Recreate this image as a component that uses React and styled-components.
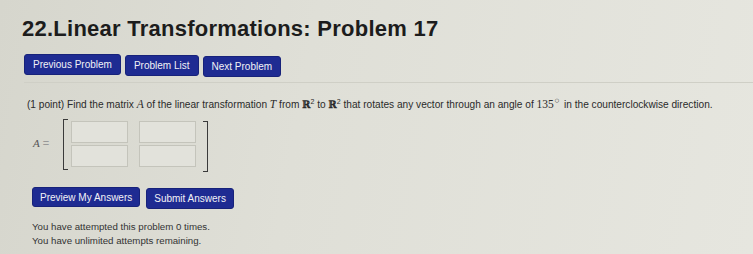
import React from "react";
import styled, { createGlobalStyle } from "styled-components";

const GlobalStyle = createGlobalStyle`
  html, body {
    margin: 0;
    padding: 0;
  }
  body {
    width: 753px;
    height: 254px;
    overflow: hidden;
    background: linear-gradient(100deg, #d6d6cd 0%, #dfdfd7 40%, #e6e6df 100%);
    font-family: "Liberation Sans", Arial, sans-serif;
    color: #2b2b2b;
  }
  sup {
    font-size: 7px;
    line-height: 0;
    vertical-align: 4px;
  }
`;

const Page = styled.div`
  padding: 16px 0 0 22px;
`;

const Title = styled.h1`
  margin: 0;
  font-size: 22px;
  font-weight: bold;
  color: #1c1c1c;
  letter-spacing: 0.25px;
`;

const NavRow = styled.div`
  display: flex;
  gap: 4px;
  margin: 12px 0 0 2px;
  align-items: flex-start;
`;

const Button = styled.button`
  background: #1e2b92;
  color: #f2f2f6;
  border: 1px solid #17227a;
  border-radius: 3px;
  font-family: "Liberation Sans", Arial, sans-serif;
  font-size: ${(p) => p.size || 10}px;
  padding: 0 ${(p) => p.pad || 8}px;
  height: ${(p) => p.h || 21}px;
  margin-top: ${(p) => p.drop || 0}px;
  cursor: pointer;
`;

const ProblemBox = styled.div`
  margin-top: 5px;
  margin-left: 2px;
  border-top: 1px solid #cfcfc6;
  padding: 15px 0 0 3px;
`;

const Statement = styled.p`
  margin: 0;
  font-size: 10.15px;
  line-height: 13px;
  color: #2a2a2a;
`;

const MathVar = styled.span`
  font-family: "Liberation Serif", "Times New Roman", serif;
  font-style: italic;
  font-size: 11.5px;
`;

const Reals = styled.span`
  font-family: "DejaVu Serif", serif;
  font-weight: bold;
  font-size: 10px;
`;

const Num = styled.span`
  font-family: "Liberation Serif", "Times New Roman", serif;
  font-size: 11.5px;
`;

const Degree = styled.sup`
  font-family: "DejaVu Sans", sans-serif;
  font-size: 5px;
  vertical-align: 6px;
  margin: 0 2px 0 1px;
`;

const MatrixRow = styled.div`
  display: flex;
  align-items: flex-start;
  margin: 8px 0 0 6px;
`;

const Label = styled.span`
  font-family: "Liberation Serif", "Times New Roman", serif;
  font-style: italic;
  font-size: 11px;
  color: #555;
  margin: 18px 3px 0 0;
`;

const Equals = styled.span`
  color: #999;
  font-size: 11px;
  margin: 18px 14px 0 0;
`;

const Bracket = styled.div`
  width: 4px;
  height: 49px;
  border: 1.5px solid #3a3a3a;
  border-${(p) => (p.side === "left" ? "right" : "left")}: none;
  margin-top: ${(p) => p.offset || 0}px;
`;

const Grid = styled.div`
  display: grid;
  grid-template-columns: 57px 57px;
  grid-auto-rows: 22px;
  column-gap: 11px;
  row-gap: 2px;
  margin: 2px 7px 0 3px;
`;

const Cell = styled.input`
  box-sizing: border-box;
  width: 100%;
  height: 100%;
  border: 1px solid #c4c4bb;
  background: #e2e2db;
  margin: 0;
  padding: 0;
`;

const ActionRow = styled.div`
  display: flex;
  align-items: flex-start;
  gap: 6px;
  margin: 15px 0 0 5px;
`;

const Notes = styled.div`
  margin: 11px 0 0 5px;
  font-size: 9.7px;
  line-height: 14px;
  color: #333;
`;

export default function App() {
  return (
    <>
      <GlobalStyle />
      <Page>
        <Title>22.Linear Transformations: Problem 17</Title>
        <NavRow>
          <Button size={10} pad={8} h={21}>Previous Problem</Button>
          <Button size={10} pad={8} h={21} drop={1}>Problem List</Button>
          <Button size={10} pad={8} h={21} drop={2}>Next Problem</Button>
        </NavRow>
        <ProblemBox>
          <Statement>
            (1 point) Find the matrix <MathVar>A</MathVar> of the linear transformation{" "}
            <MathVar>T</MathVar> from <Reals>ℝ</Reals><sup>2</sup> to <Reals>ℝ</Reals>
            <sup>2</sup> that rotates any vector through an angle of <Num>135</Num>
            <Degree>○</Degree> in the counterclockwise direction.
          </Statement>
          <MatrixRow>
            <Label>A</Label>
            <Equals>=</Equals>
            <Bracket side="left" />
            <Grid>
              <Cell />
              <Cell />
              <Cell />
              <Cell />
            </Grid>
            <Bracket side="right" offset={2} />
          </MatrixRow>
          <ActionRow>
            <Button size={10} pad={7} h={20}>Preview My Answers</Button>
            <Button size={10} pad={7} h={21} drop={1}>Submit Answers</Button>
          </ActionRow>
          <Notes>
            You have attempted this problem 0 times.
            <br />
            You have unlimited attempts remaining.
          </Notes>
        </ProblemBox>
      </Page>
    </>
  );
}
